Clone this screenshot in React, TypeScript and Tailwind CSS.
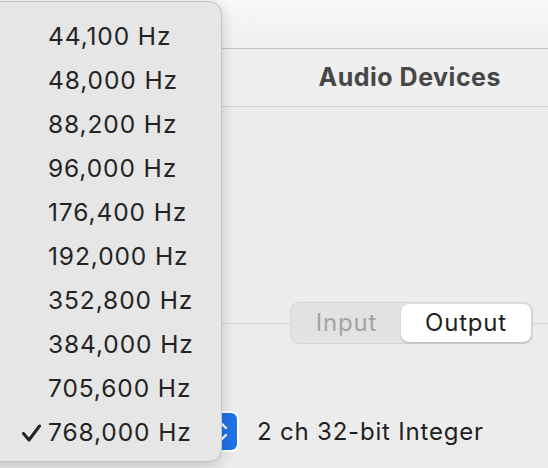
import React from "react";

const rates = [
  "44,100 Hz",
  "48,000 Hz",
  "88,200 Hz",
  "96,000 Hz",
  "176,400 Hz",
  "192,000 Hz",
  "352,800 Hz",
  "384,000 Hz",
  "705,600 Hz",
  "768,000 Hz",
];

export default function App() {
  return (
    <div className="relative w-[548px] h-[468px] overflow-hidden bg-[#ececec] font-['Inter',sans-serif]">
      <div className="h-[49px] bg-gradient-to-b from-[#f8f8f8] to-[#efefef] border-b border-[#c6c6c6]" />
      <div className="h-[58px] bg-[#efefef] border-b border-[#d0d0d0] flex items-center justify-end pr-[47px]">
        <span className="text-[25px] font-bold text-[#474747] tracking-[0.5px]">Audio Devices</span>
      </div>
      <div className="mt-[195px] flex items-center h-[42px]">
        <div className="flex-1 h-px bg-[#d7d7d7]" />
        <div className="w-[243px] h-[42px] rounded-[9px] bg-[#e2e2e2] border border-[#d6d6d6] flex items-center p-[1px]">
          <div className="w-[109px] text-center text-[24px] tracking-[0.8px] text-[#a3a3a3]">Input</div>
          <div className="flex-1 h-full rounded-[8px] bg-white shadow-[0_1px_2px_rgba(0,0,0,0.2)] flex items-center justify-center text-[24px] tracking-[0.8px] text-[#1f1f1f]">
            Output
          </div>
        </div>
        <div className="w-[15px] h-px bg-[#d7d7d7]" />
      </div>
      <div className="mt-[67px] flex items-center h-[41px]">
        <div className="w-[239px] h-[41px] flex justify-end">
          <div className="w-[36px] h-[41px] rounded-[8px] bg-white p-[2px]">
            <div className="w-full h-full rounded-[6px] bg-[#1f72e8] flex items-center justify-center">
              <svg width="32" height="37" viewBox="0 0 32 37" fill="none" stroke="white" strokeWidth="2.4" strokeLinecap="round" strokeLinejoin="round">
                <path d="M11 15 L16 10 L21 15" />
                <path d="M11 22 L16 27 L21 22" />
              </svg>
            </div>
          </div>
        </div>
        <span className="ml-[18px] text-[24px] tracking-[0.8px] text-[#1f1f1f]">2 ch 32-bit Integer</span>
      </div>

      <div className="absolute left-[-20px] top-[1px] w-[242px] h-[461px] rounded-[13px] bg-[#e6e6e6] border border-[#c3c3c3] shadow-[0_4px_14px_rgba(0,0,0,0.18)] pt-[12px]">
        {rates.map((r, i) => (
          <div key={r} className="relative h-[44px] flex items-center pl-[67px] text-[24.5px] tracking-[0.9px] text-[#242424]">
            {i === rates.length - 1 && (
              <svg
                className="absolute left-[40px] top-[14px]"
                width="21"
                height="18"
                viewBox="0 0 21 18"
                fill="none"
                stroke="#242424"
                strokeWidth="3"
                strokeLinecap="round"
                strokeLinejoin="round"
              >
                <path d="M2.5 9.5 L8 16 L18.5 2" />
              </svg>
            )}
            {r}
          </div>
        ))}
      </div>
    </div>
  );
}
